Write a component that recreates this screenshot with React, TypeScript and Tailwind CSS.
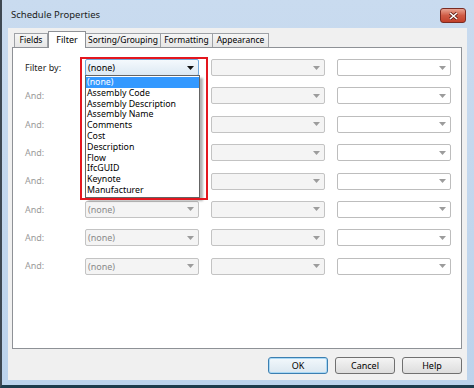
import React from "react"

type ComboKind = "active" | "disabled" | "white"

function Arrow({ color }: { color: string }) {
  return (
    <svg width="7" height="4" viewBox="0 0 7 4">
      <path d="M0 0h7L3.5 4z" fill={color} />
    </svg>
  )
}

function Combo({ kind, text }: { kind: ComboKind; text?: string }) {
  const box =
    kind === "active"
      ? "border-[#6fa7db] bg-gradient-to-b from-[#f4f9fd] to-[#dde9f3] text-black"
      : kind === "disabled"
      ? "border-[#c3c3c3] bg-[#f4f4f4] text-[#8a8a8a]"
      : "border-[#bdbdbd] bg-white text-black"
  return (
    <div className={`flex h-[17px] w-[114px] items-center justify-between rounded-[2px] border pl-[2px] pr-[4px] text-[9px] ${box}`}>
      <span className="leading-[15px]">{text ?? ""}</span>
      <Arrow color={kind === "active" ? "#111" : "#9c9c9c"} />
    </div>
  )
}

const items = [
  "(none)",
  "Assembly Code",
  "Assembly Description",
  "Assembly Name",
  "Comments",
  "Cost",
  "Description",
  "Flow",
  "IfcGUID",
  "Keynote",
  "Manufacturer",
]

const tabs = [
  { name: "Fields", w: "w-[34px]" },
  { name: "Filter", w: "w-[38px]" },
  { name: "Sorting/Grouping", w: "w-[76px]" },
  { name: "Formatting", w: "w-[53px]" },
  { name: "Appearance", w: "w-[57px]" },
]

export default function App() {
  const rows = Array.from({ length: 8 }, (_, i) => i)

  return (
    <div className="flex h-[388px] w-[474px] flex-col border-b-[3px] border-l-2 border-b-[#1d3c4c] border-l-[#3e4852] bg-gradient-to-b from-[#c9dbef] to-[#bcd3ec] font-['Noto_Sans',sans-serif]">
      {/* title bar */}
      <div className="flex h-[28px] shrink-0 items-start justify-between pl-[9px] pr-[8px]">
        <span className="pt-[8px] text-[9.5px] leading-[14px] text-[#1b1b1b]">Schedule Properties</span>
        <div className="mt-[8px] flex h-[15px] w-[26px] items-center justify-center rounded-[3px] border border-[#7a2b22] bg-gradient-to-b from-[#e8a493] via-[#cf5b45] to-[#c2402a]">
          <svg width="9" height="8" viewBox="0 0 9 8">
            <path d="M1 1l7 6M8 1L1 7" stroke="#5a1a12" strokeWidth="3" />
            <path d="M1 1l7 6M8 1L1 7" stroke="#fff" strokeWidth="1.6" />
          </svg>
        </div>
      </div>

      {/* client area */}
      <div className="ml-[6px] mr-[7px] flex h-[352px] flex-col bg-[#f0f0f0] pl-[4px]">
        <div className="flex h-[19px] items-end pl-[2px]">
          {tabs.map((t) =>
            t.name === "Filter" ? (
              <div
                key={t.name}
                className={`${t.w} relative z-10 -mb-px flex h-[17px] items-center justify-center border border-b-0 border-[#8e9196] bg-white text-[9px] text-black`}
              >
                {t.name}
              </div>
            ) : (
              <div
                key={t.name}
                className={`${t.w} -ml-px flex h-[14px] items-center justify-center border border-b-0 border-[#9ea1a6] bg-gradient-to-b from-[#f6f6f6] to-[#e6e6e6] text-[8.5px] text-black first:ml-0`}
              >
                {t.name}
              </div>
            )
          )}
        </div>

        {/* panel */}
        <div className="flex h-[302px] w-[450px] flex-col gap-[11.4px] border border-[#8e9196] bg-white pl-[12px] pt-[11px]">
          {rows.map((i) => (
            <div key={i} className="flex h-[17px] items-center">
              <span className={`w-[60px] text-[9px] ${i === 0 ? "text-[#1b1b1b]" : "text-[#9a9a9a]"}`}>
                {i === 0 ? "Filter by:" : "And:"}
              </span>
              <div className="flex gap-[12px]">
                {i === 0 ? (
                  <div className="relative">
                    <Combo kind="active" text="(none)" />
                    <div className="absolute left-0 top-[16px] z-20 w-[115px] border border-[#646464] bg-white py-px shadow-[3px_3px_2px_rgba(0,0,0,0.3)]">
                      {items.map((it, k) => (
                        <div
                          key={it}
                          className={`h-[10.8px] pl-px text-[8.8px] leading-[10.8px] ${k === 0 ? "bg-[#3399ff] text-white" : "text-black"}`}
                        >
                          {it}
                        </div>
                      ))}
                    </div>
                    <div className="absolute left-[-5px] top-[-2px] z-30 h-[143px] w-[128px] border-2 border-[#e3161e]" />
                  </div>
                ) : (
                  <Combo kind="disabled" text={i >= 5 ? "(none)" : undefined} />
                )}
                <Combo kind="disabled" />
                <Combo kind="white" />
              </div>
            </div>
          ))}
        </div>

        {/* buttons */}
        <div className="mt-[8px] flex w-[450px] justify-end gap-[7px]">
          <button className="h-[17px] w-[60px] rounded-[3px] border border-[#3c7fb1] bg-gradient-to-b from-[#f2f8fc] to-[#dbe7f0] text-[9px] text-black shadow-[inset_0_0_0_1px_#a8d8f5]">
            OK
          </button>
          <button className="h-[17px] w-[60px] rounded-[3px] border border-[#707070] bg-gradient-to-b from-[#f4f4f4] to-[#dddddd] text-[9px] text-black">
            Cancel
          </button>
          <button className="h-[17px] w-[60px] rounded-[3px] border border-[#707070] bg-gradient-to-b from-[#f4f4f4] to-[#dddddd] text-[9px] text-black">
            Help
          </button>
        </div>
      </div>
    </div>
  )
}
